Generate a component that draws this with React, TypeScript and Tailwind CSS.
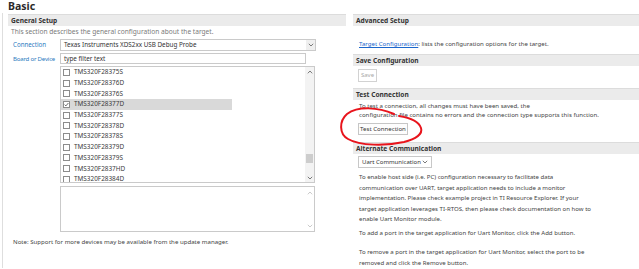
const DEVICES = [
  'TMS320F28375S',
  'TMS320F28376D',
  'TMS320F28376S',
  'TMS320F28377D',
  'TMS320F28377S',
  'TMS320F28378D',
  'TMS320F28378S',
  'TMS320F28379D',
  'TMS320F28379S',
  'TMS320F2837HD',
  'TMS320F28384D',
]

function Chevron({ up = false, color = '#6b6b6b' }: { up?: boolean; color?: string }) {
  return (
    <svg width="6" height="4" viewBox="0 0 6 4" className="block">
      <path
        d={up ? 'M0.8 3.3 L3 1 L5.2 3.3' : 'M0.8 0.8 L3 3 L5.2 0.8'}
        fill="none"
        stroke={color}
        strokeWidth="0.9"
      />
    </svg>
  )
}

function SectionHeader({ title }: { title: string }) {
  return (
    <div className="h-[12px] border-t border-[#dcdcdc] bg-[#ebebeb] pl-[3px] text-[6.6px] font-bold leading-[11px] text-[#333]">
      {title}
    </div>
  )
}

function DeviceRow({ name, checked }: { name: string; checked: boolean }) {
  return (
    <div className={`flex h-[10.7px] shrink-0 items-center ${checked ? 'w-[171px] bg-[#d9d9d9]' : ''}`}>
      <div className="ml-[2px] flex h-[7px] w-[7px] items-center justify-center border border-[#8c8c8c] bg-white">
        {checked && (
          <svg width="5" height="5" viewBox="0 0 5 5">
            <path d="M0.6 2.6 L1.9 3.9 L4.4 1" fill="none" stroke="#444" strokeWidth="0.8" />
          </svg>
        )}
      </div>
      <span className="ml-[4px] text-[6.4px] leading-[10px] text-[#3a3a3a]">{name}</span>
    </div>
  )
}

function GeneralSetup() {
  return (
    <div className="ml-[2px] w-[344px] border-l border-[#dedede] pl-[5px] pt-[1px]">
      <SectionHeader title="General Setup" />
      <div className="mt-[1px] pl-[3px] text-[6.6px] leading-[10px] text-[#7a7a7a]">
        This section describes the general configuration about the target.
      </div>

      <div className="mt-[2px] flex items-center">
        <div className="w-[52px] whitespace-nowrap pl-[5px] text-[6.2px] text-[#2b7bc0]">Connection</div>
        <div className="flex h-[12px] w-[256px] items-center border border-[#cacaca] bg-white">
          <span className="flex-1 whitespace-nowrap pl-[3px] text-[6.3px] text-[#333]">Texas Instruments XDS2xx USB Debug Probe</span>
          <div className="flex h-full w-[9px] items-center justify-center bg-[#efefef]">
            <Chevron />
          </div>
        </div>
      </div>

      <div className="mt-[2px] flex items-center">
        <div className="w-[52px] overflow-hidden whitespace-nowrap pl-[5px] text-[6.1px] tracking-[-0.22px] text-[#2b7bc0]">Board or Device</div>
        <div className="flex h-[11px] w-[246px] items-center border border-[#cacaca] bg-white pl-[3px] text-[6.3px] text-[#333]">
          type filter text
        </div>
      </div>

      <div className="ml-[52px] mt-[2px] flex h-[117px] w-[255px] border border-[#cacaca] bg-white">
        <div className="flex flex-1 flex-col overflow-hidden">
          {DEVICES.map((d) => (
            <DeviceRow key={d} name={d} checked={d === 'TMS320F28377D'} />
          ))}
        </div>
        <div className="flex w-[9px] flex-col items-center bg-[#f3f3f3]">
          <div className="mt-[3px]">
            <Chevron up />
          </div>
          <div className="mt-[80px] h-[9px] w-[7px] bg-[#cdcdcd]" />
          <div className="mt-auto mb-[2px]">
            <Chevron />
          </div>
        </div>
      </div>

      <div className="ml-[52px] mt-[3px] flex h-[46px] w-[255px] justify-end border border-[#cacaca] bg-white">
        <div className="flex w-[9px] flex-col items-center">
          <div className="mt-[4px]">
            <Chevron up color="#c4c4c4" />
          </div>
          <div className="mt-auto mb-[3px]">
            <Chevron color="#c4c4c4" />
          </div>
        </div>
      </div>

      <div className="mt-[5px] pl-[5px] text-[6.1px] leading-[10px] text-[#444]">
        Note: Support for more devices may be available from the update manager.
      </div>
    </div>
  )
}

function RightPanel() {
  return (
    <div className="ml-[7px] w-[286px] pt-[1px]">
      <SectionHeader title="Advanced Setup" />
      <div className="mt-[13px] pl-[6px] text-[6.1px] leading-[10px] text-[#444]">
        <span className="text-[#1a66cc] underline">Target Configuration</span>: lists the configuration options for the target.
      </div>

      <div className="mt-[5px]">
        <SectionHeader title="Save Configuration" />
      </div>
      <div className="ml-[5px] mt-[3px] flex h-[13px] w-[19px] items-center justify-center border border-[#d2d2d2] text-[6px] text-[#a8a8a8]">
        Save
      </div>

      <div className="mt-[6px]">
        <SectionHeader title="Test Connection" />
      </div>
      <div className="mt-[1px] pl-[6px] text-[6.1px] leading-[9px] text-[#444]">
        <div>To test a connection, all changes must have been saved, the</div>
        <div>configuration file contains no errors and the connection type supports this function.</div>
      </div>
      <div className="ml-[5px] mt-[4px] flex h-[12px] w-[50px] items-center justify-center whitespace-nowrap border border-[#c6c6c6] bg-[#fdfdfd] text-[6.1px] text-[#333]">
        Test Connection
      </div>

      <div className="mt-[7px]">
        <SectionHeader title="Alternate Communication" />
      </div>
      <div className="ml-[5px] mt-[2px] flex h-[12px] w-[74px] items-center border border-[#c8c8c8] bg-white">
        <span className="flex-1 whitespace-nowrap pl-[3px] text-[6px] text-[#333]">Uart Communication</span>
        <div className="mr-[3px]">
          <Chevron />
        </div>
      </div>

      <div className="mt-[4px] pl-[6px] text-[6.05px] leading-[10.5px] text-[#444]">
        <div>To enable host side (i.e. PC) configuration necessary to facilitate data</div>
        <div>communication over UART, target application needs to include a monitor</div>
        <div>implementation. Please check example project in TI Resource Explorer. If your</div>
        <div>target application leverages TI-RTOS, then please check documentation on how to</div>
        <div>enable Uart Monitor module.</div>
        <div className="mt-[3px]">To add a port in the target application for Uart Monitor, click the Add button.</div>
        <div className="mt-[9px]">To remove a port in the target application for Uart Monitor, select the port to be</div>
        <div>removed and click the Remove button.</div>
      </div>
    </div>
  )
}

export default function App() {
  return (
    <div className="relative h-[269px] w-[639px] overflow-hidden bg-white font-['Noto_Sans',sans-serif] text-[#333]">
      <div className="h-[13px] pl-[8px] text-[10.5px] font-bold leading-[13px] text-[#2a2a2a]">Basic</div>
      <div className="flex">
        <GeneralSetup />
        <RightPanel />
      </div>

      {/* hand-drawn red circle around the button */}
      <svg className="pointer-events-none absolute left-0 top-0" width="639" height="269" viewBox="0 0 639 269">
        <path
          d="M394 114 C378 107 358 106 347 114 C339 121 339 134 348 139 C360 146 386 146 404 142 C416 139 423 134 421 128 C419 122 411 118 399 116"
          fill="none"
          stroke="#e8141c"
          strokeWidth="2"
          strokeLinecap="round"
        />
      </svg>
    </div>
  )
}
